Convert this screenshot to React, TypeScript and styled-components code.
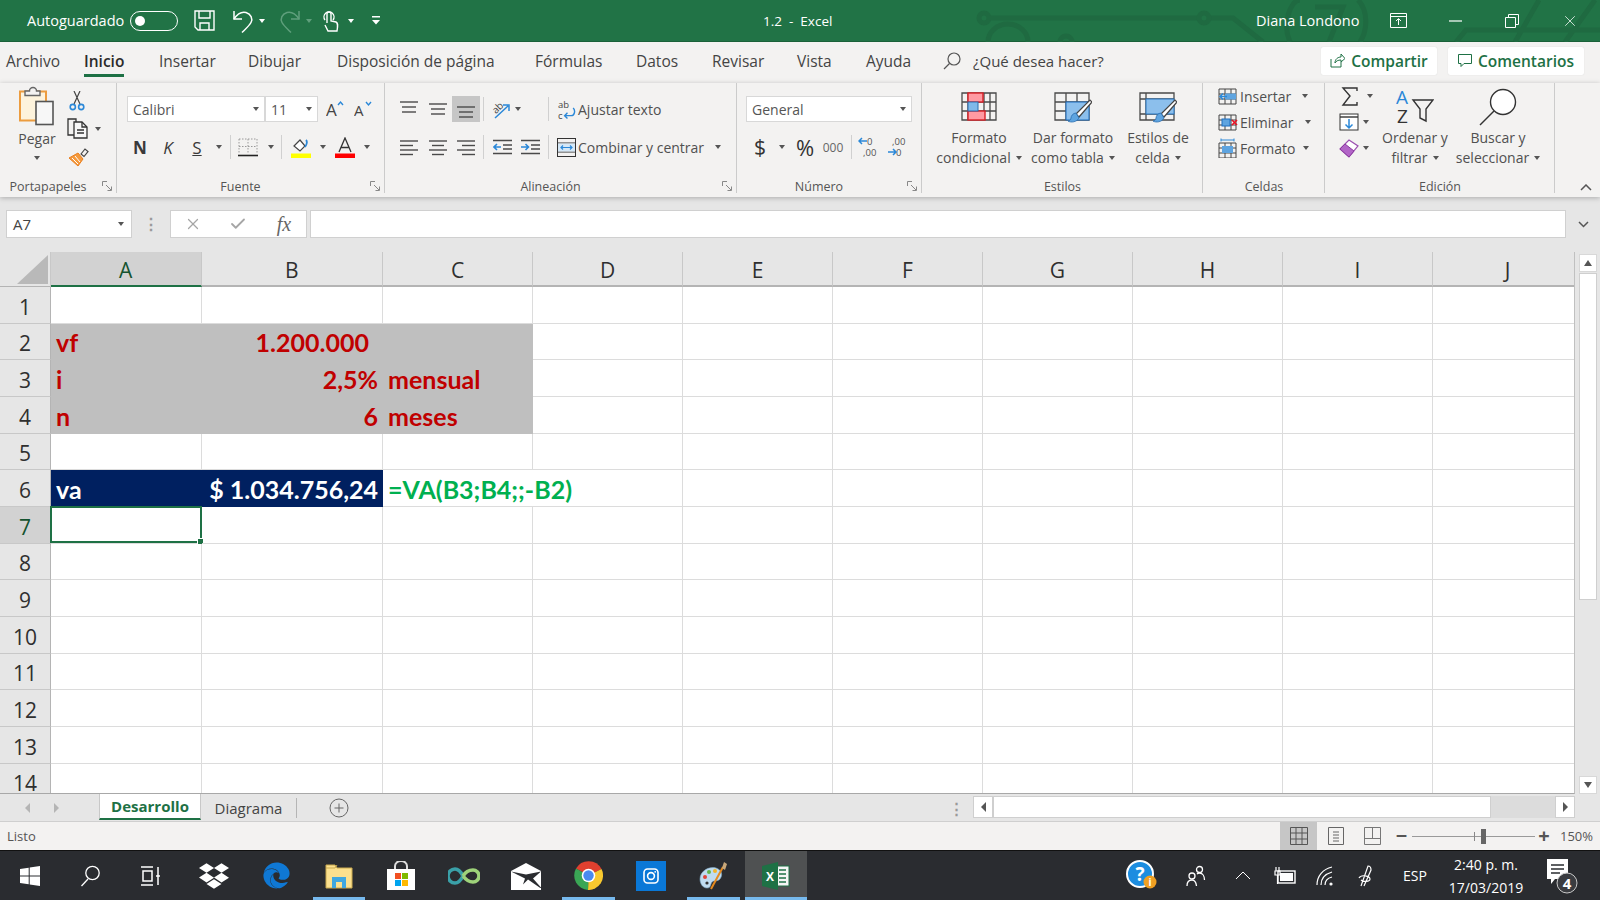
import React from "react";
import styled, { createGlobalStyle } from "styled-components";
import { FaDropbox, FaEdge } from "react-icons/fa";
import { X, Check } from "lucide-react";

const GlobalStyle = createGlobalStyle`
  html, body { margin: 0; padding: 0; width: 1600px; height: 900px; overflow: hidden; background: #e6e6e6; }
  body { font-family: "Open Sans", "Noto Sans", sans-serif; color: #444; }
`;

const ink = "#444";
const green = "#217346";
const blue = "#2b88d8";

const Page = styled.div`
  width: 1600px;
  height: 900px;
  display: flex;
  flex-direction: column;
  overflow: hidden;
`;

/* title bar */
const TitleBar = styled.div`
  position: relative;
  height: 42px;
  flex: none;
  display: flex;
  align-items: center;
  background: ${green};
  border-bottom: 1px solid #1a6139;
  box-sizing: border-box;
  color: #fff;
  font-size: 15px;
`;
const Circuit = styled.svg`
  position: absolute;
  left: 960px;
  top: 0;
`;
const TitleLeft = styled.div`
  position: relative;
  width: 763px;
  flex: none;
  display: flex;
  align-items: center;
  padding-left: 27px;
  box-sizing: border-box;
`;
const TitleText = styled.span`
  position: relative;
  white-space: pre;
  font-size: 13.5px;
`;
const TitleRight = styled.div`
  position: relative;
  margin-left: auto;
  display: flex;
  align-items: center;
  padding-right: 13px;
`;
const UserName = styled.span`
  width: 101px;
  white-space: nowrap;
  font-size: 14.5px;
`;
const AutoLabel = styled.span`
  width: 97px;
  white-space: nowrap;
  font-size: 14.5px;
`;
const Toggle = styled.span`
  width: 48px;
  height: 20px;
  margin-left: 6px;
  flex: none;
  box-sizing: border-box;
  border: 1.5px solid #fff;
  border-radius: 10px;
  display: flex;
  align-items: center;
  padding-left: 4px;
  &::before {
    content: "";
    width: 10px;
    height: 10px;
    border-radius: 50%;
    background: #fff;
  }
`;

const Tool = styled.span<{ $w: number; $h?: number; $ml?: number; $on?: boolean; $color?: string; $size?: number }>`
  width: ${(p) => p.$w}px;
  margin-left: ${(p) => p.$ml ?? 0}px;
  flex: none;
  display: flex;
  align-items: center;
  justify-content: center;
  height: ${(p) => p.$h ?? 26}px;
  background: ${(p) => (p.$on ? "#c6c6c6" : "transparent")};
  color: ${(p) => p.$color ?? ink};
  font-size: ${(p) => p.$size ?? 14}px;
  white-space: nowrap;
`;
const Caret = styled.span<{ $c?: string }>`
  width: 0;
  height: 0;
  flex: none;
  border-left: 3.5px solid transparent;
  border-right: 3.5px solid transparent;
  border-top: 4px solid ${(p) => p.$c ?? "#555"};
`;

/* tabs */
const TabRow = styled.div`
  height: 41px;
  flex: none;
  display: flex;
  align-items: center;
  box-sizing: border-box;
  padding: 0 0 4px 6px;
  background: #f3f2f1;
  font-size: 15.5px;
  color: ${ink};
`;
const Tab = styled.div<{ $w: number }>`
  width: ${(p) => p.$w}px;
  flex: none;
  white-space: nowrap;
`;
const TabLabel = styled.span<{ $active?: boolean }>`
  position: relative;
  display: inline-block;
  font-weight: ${(p) => (p.$active ? 600 : 400)};
  color: ${(p) => (p.$active ? "#2b2b2b" : ink)};
  &::after {
    content: "";
    display: ${(p) => (p.$active ? "block" : "none")};
    position: absolute;
    left: 0;
    right: 0;
    bottom: -5px;
    height: 3px;
    background: #1e7145;
  }
`;
const TellMe = styled.div`
  width: 378px;
  flex: none;
  display: flex;
  align-items: center;
  gap: 12px;
  white-space: nowrap;
  font-size: 15px;
`;
const ShareButton = styled.div<{ $w: number }>`
  width: ${(p) => p.$w}px;
  height: 28px;
  margin-right: 11px;
  flex: none;
  display: flex;
  align-items: center;
  justify-content: center;
  gap: 6px;
  background: #fff;
  border-radius: 2px;
  box-shadow: 0 0 1px #ccc;
  color: #1e7145;
  font-weight: 600;
  font-size: 15.5px;
  white-space: nowrap;
`;

/* ribbon */
const Ribbon = styled.div`
  position: relative;
  z-index: 2;
  height: 114px;
  flex: none;
  display: flex;
  background: #f3f2f1;
  box-shadow: 0 1px 5px rgba(0, 0, 0, 0.25);
`;
const Group = styled.div<{ $w: number }>`
  position: relative;
  width: ${(p) => p.$w}px;
  height: 114px;
  flex: none;
  display: flex;
  flex-direction: column;
  box-sizing: border-box;
  &::after {
    content: "";
    position: absolute;
    right: 0;
    top: 0;
    bottom: 4px;
    width: 1.5px;
    background: #cbcbcb;
  }
`;
const GroupBody = styled.div<{ $pl?: number; $pt?: number }>`
  flex: 1;
  display: flex;
  padding-left: ${(p) => p.$pl ?? 0}px;
  padding-top: ${(p) => p.$pt ?? 0}px;
  min-height: 0;
`;
const Stack = styled.div<{ $gap?: number; $w?: number }>`
  display: flex;
  flex-direction: column;
  flex: none;
  width: ${(p) => (p.$w ? `${p.$w}px` : "auto")};
  gap: ${(p) => p.$gap ?? 12}px;
`;
const ToolRow = styled.div<{ $h?: number }>`
  display: flex;
  align-items: center;
  height: ${(p) => p.$h ?? 26}px;
`;
const GroupLabel = styled.div<{ $launch?: boolean }>`
  height: 20px;
  line-height: 20px;
  box-sizing: border-box;
  padding-right: ${(p) => (p.$launch ? 21 : 0)}px;
  text-align: center;
  font-size: 12.5px;
  color: #555;
  white-space: nowrap;
`;
const Launcher = styled.svg`
  position: absolute;
  right: 5px;
  bottom: 6px;
`;
const Sep = styled.span<{ $l: number; $r: number }>`
  width: 1px;
  height: 24px;
  flex: none;
  margin: 0 ${(p) => p.$r}px 0 ${(p) => p.$l}px;
  background: #d0d0d0;
`;
const ComboBox = styled.div<{ $w: number }>`
  width: ${(p) => p.$w}px;
  height: 26px;
  flex: none;
  box-sizing: border-box;
  display: flex;
  align-items: center;
  justify-content: space-between;
  padding: 0 5px;
  background: #fff;
  border: 1px solid #d8d8d8;
  font-size: 14px;
  color: #555;
`;
const BigButton = styled.div<{ $w: number; $ml?: number }>`
  width: ${(p) => p.$w}px;
  margin-left: ${(p) => p.$ml ?? 0}px;
  flex: none;
  display: flex;
  flex-direction: column;
  align-items: center;
  font-size: 14px;
  line-height: 20px;
  color: #505050;
`;
const BigIcon = styled.div<{ $h?: number; $pt?: number }>`
  height: ${(p) => p.$h ?? 36}px;
  padding-top: ${(p) => p.$pt ?? 0}px;
  box-sizing: border-box;
  display: flex;
  align-items: flex-start;
  justify-content: center;
`;
const BigLine = styled.span<{ $mt?: number }>`
  display: flex;
  align-items: center;
  gap: 5px;
  margin-top: ${(p) => p.$mt ?? 0}px;
  white-space: nowrap;
`;
const SmallIcons = styled.div`
  display: flex;
  flex-direction: column;
  align-items: flex-start;
  margin-left: 11px;
`;
const Collapse = styled.div`
  flex: 1;
  display: flex;
  align-items: flex-end;
  justify-content: flex-end;
  padding: 0 8px 6px 0;
`;
const TextTool = styled.span<{ $w: number }>`
  width: ${(p) => p.$w}px;
  margin-left: 2px;
  flex: none;
  white-space: nowrap;
  font-size: 14px;
  color: #505050;
`;
const Glyph = styled.span<{ $b?: boolean; $i?: boolean; $u?: boolean; $s?: number }>`
  font-weight: ${(p) => (p.$b ? 700 : 400)};
  font-style: ${(p) => (p.$i ? "italic" : "normal")};
  text-decoration: ${(p) => (p.$u ? "underline" : "none")};
  font-size: ${(p) => p.$s ?? 16}px;
  color: #3a3a3a;
`;

/* formula bar */
const FormulaBar = styled.div`
  height: 55px;
  flex: none;
  display: flex;
  align-items: flex-start;
  padding: 13px 0 0 6px;
  box-sizing: border-box;
  background: #e6e6e6;
`;
const FxField = styled.div<{ $w: number; $ml?: number }>`
  width: ${(p) => p.$w}px;
  height: 28px;
  margin-left: ${(p) => p.$ml ?? 0}px;
  flex: none;
  display: flex;
  align-items: center;
  box-sizing: border-box;
  background: #fff;
  border: 1px solid #d0d0d0;
  font-size: 15px;
  color: #444;
`;
const NameText = styled.span`
  width: 105px;
  padding-left: 6px;
`;
const FxDots = styled.span`
  width: 38px;
  flex: none;
  text-align: center;
  color: #9a9a9a;
  font-size: 16px;
  line-height: 28px;
  font-weight: 700;
`;
const FxGlyph = styled.span`
  font-family: "Liberation Serif", serif;
  font-style: italic;
  font-size: 20px;
  color: #666;
`;

/* sheet */
const SheetArea = styled.div`
  height: 542px;
  flex: none;
  display: flex;
  background: #fff;
`;
const Grid = styled.div`
  width: 1575px;
  height: 542px;
  flex: none;
  overflow: hidden;
  display: grid;
  grid-template-columns: 51px 150.5px 181.5px repeat(8, 150px);
  grid-auto-rows: 36.67px;
  grid-template-rows: 35px;
  border-bottom: 1px solid #a8a8a8;
  border-right: 1px solid #c0c0c0;
  box-sizing: border-box;
`;
const Corner = styled.div`
  background: #e6e6e6;
  border-right: 1px solid #c8c8c8;
  border-bottom: 1px solid #b4b4b4;
  display: flex;
  align-items: flex-end;
  justify-content: flex-end;
  padding: 0 2px 2px 0;
`;
const ColHead = styled.div<{ $active?: boolean }>`
  display: flex;
  align-items: center;
  justify-content: center;
  padding-top: 3px;
  font-size: 21px;
  box-sizing: border-box;
  color: ${(p) => (p.$active ? "#14532f" : "#2f2f2f")};
  background: ${(p) => (p.$active ? "#d2d2d2" : "#e6e6e6")};
  border-right: 1px solid #c8c8c8;
  border-bottom: ${(p) => (p.$active ? "2px solid #1e7145" : "2px solid #b4b4b4")};
`;
const RowHead = styled.div<{ $active?: boolean }>`
  display: flex;
  align-items: center;
  justify-content: center;
  font-size: 21px;
  padding-top: 4px;
  box-sizing: border-box;
  color: ${(p) => (p.$active ? "#14532f" : "#2f2f2f")};
  background: ${(p) => (p.$active ? "#d2d2d2" : "#e6e6e6")};
  border-right: 1px solid #b4b4b4;
  border-bottom: 1px solid #c8c8c8;
`;
const Cell = styled.div<{ $bg?: string; $fg?: string; $right?: boolean; $pr?: number; $bare?: boolean; $open?: boolean }>`
  position: relative;
  display: flex;
  align-items: center;
  justify-content: ${(p) => (p.$right ? "flex-end" : "flex-start")};
  box-sizing: border-box;
  padding: 1px ${(p) => p.$pr ?? 5}px 0 5px;
  background: ${(p) => p.$bg ?? "transparent"};
  color: ${(p) => p.$fg ?? "#000"};
  border-right: ${(p) => (p.$bare || p.$open ? "none" : "1px solid #dcdcdc")};
  border-bottom: ${(p) => (p.$bare ? "none" : "1px solid #dcdcdc")};
  font-family: Lato, "Open Sans", sans-serif;
  font-weight: 700;
  font-size: 25px;
  white-space: nowrap;
`;
const Selection = styled.div`
  position: absolute;
  inset: -1px -1px 0 -1px;
  border: 2px solid #1e7145;
  &::after {
    content: "";
    position: absolute;
    right: -4px;
    bottom: -4px;
    width: 5px;
    height: 5px;
    background: #1e7145;
    border: 1px solid #fff;
  }
`;
const VScroll = styled.div`
  width: 25px;
  flex: none;
  display: flex;
  flex-direction: column;
  align-items: center;
  padding-top: 2px;
  height: 542px;
  box-sizing: border-box;
  background: #e6e6e6;
`;
const VButton = styled.div`
  width: 18px;
  height: 18px;
  flex: none;
  display: flex;
  align-items: center;
  justify-content: center;
  background: #fff;
  border: 1px solid #d8d8d8;
  box-sizing: border-box;
`;
const VThumb = styled.div`
  width: 18px;
  height: 327px;
  flex: none;
  margin-top: 1px;
  margin-bottom: auto;
  background: #fff;
  border: 1px solid #cfcfcf;
  box-sizing: border-box;
`;
const TriDown = styled.span`
  border-left: 4.5px solid transparent;
  border-right: 4.5px solid transparent;
  border-top: 6px solid #555;
`;
const TriUp = styled.span`
  border-left: 4.5px solid transparent;
  border-right: 4.5px solid transparent;
  border-bottom: 6px solid #555;
`;
const TriSide = styled.span<{ $dir: "l" | "r"; $c?: string }>`
  border-top: 5px solid transparent;
  border-bottom: 5px solid transparent;
  ${(p) => (p.$dir === "l" ? `border-right: 5px solid ${p.$c ?? "#555"};` : `border-left: 5px solid ${p.$c ?? "#555"};`)}
`;

/* sheet tabs */
const SheetBar = styled.div`
  height: 28px;
  flex: none;
  display: flex;
  align-items: stretch;
  background: #e6e6e6;
  border-bottom: 1px solid #cfcfcf;
  box-sizing: border-box;
`;
const SheetTab = styled.div<{ $active?: boolean; $w: number }>`
  width: ${(p) => p.$w}px;
  flex: none;
  display: flex;
  align-items: center;
  justify-content: center;
  box-sizing: border-box;
  font-size: 15px;
  white-space: nowrap;
  font-weight: ${(p) => (p.$active ? 700 : 400)};
  color: ${(p) => (p.$active ? "#1e7145" : "#444")};
  background: ${(p) => (p.$active ? "#fff" : "transparent")};
  height: ${(p) => (p.$active ? "26px" : "auto")};
  border-bottom: ${(p) => (p.$active ? "2px solid #1e7145" : "none")};
  border-left: ${(p) => (p.$active ? "1px solid #c8c8c8" : "none")};
  border-right: ${(p) => (p.$active ? "1px solid #c8c8c8" : "none")};
`;
const NavSlot = styled.div<{ $w: number }>`
  width: ${(p) => p.$w}px;
  flex: none;
  display: flex;
  align-items: center;
  justify-content: center;
`;
const TabDots = styled.div`
  width: 586px;
  flex: none;
  box-sizing: border-box;
  padding-right: 2px;
  display: flex;
  align-items: center;
  justify-content: flex-end;
  color: #999;
  font-weight: 700;
  font-size: 15px;
`;
const TabDivider = styled.span`
  width: 1px;
  height: 20px;
  align-self: center;
  background: #b5b5b5;
  flex: none;
`;
const HScroll = styled.div`
  width: 602px;
  height: 22px;
  margin: 2px 0 0 7px;
  flex: none;
  display: flex;
  background: #dcdcdc;
`;
const HButton = styled.div`
  width: 20px;
  flex: none;
  display: flex;
  align-items: center;
  justify-content: center;
  background: #fff;
  box-sizing: border-box;
  border: 1px solid #cfcfcf;
`;
const HThumb = styled.div`
  width: 498px;
  flex: none;
  background: #fff;
  box-sizing: border-box;
  border: 1px solid #cfcfcf;
`;
const HTrack = styled.div`
  flex: 1;
`;

/* status bar */
const StatusBar = styled.div`
  height: 28px;
  flex: none;
  display: flex;
  align-items: center;
  background: #f3f2f1;
  font-size: 13px;
  color: #555;
  padding-left: 7px;
`;
const StatusText = styled.span`
  width: 1273px;
  flex: none;
`;
const ViewButton = styled.div<{ $on?: boolean; $w: number }>`
  width: ${(p) => p.$w}px;
  height: 28px;
  flex: none;
  display: flex;
  align-items: center;
  justify-content: center;
  background: ${(p) => (p.$on ? "#c6c6c6" : "transparent")};
`;
const ZoomSign = styled.span<{ $w: number }>`
  width: ${(p) => p.$w}px;
  flex: none;
  text-align: center;
  font-size: 20px;
  font-weight: 700;
  line-height: 20px;
  color: #555;
`;
const ZoomTrack = styled.div`
  position: relative;
  width: 123px;
  height: 1px;
  flex: none;
  background: #9a9a9a;
`;
const ZoomThumb = styled.span`
  position: absolute;
  left: 69px;
  top: -7px;
  width: 5px;
  height: 15px;
  background: #666;
`;
const ZoomTick = styled.span`
  position: absolute;
  left: 62px;
  top: -4px;
  width: 1px;
  height: 9px;
  background: #888;
`;
const ZoomValue = styled.span`
  width: 47px;
  flex: none;
  font-size: 13px;
  text-align: center;
`;

/* taskbar */
const Taskbar = styled.div`
  height: 50px;
  flex: none;
  display: flex;
  align-items: stretch;
  background: #2a2c30;
  border-top: 1px solid #111;
  box-sizing: border-box;
  color: #fff;
`;
const TaskSlot = styled.div<{ $w: number; $on?: boolean; $mark?: "short" | "full" }>`
  position: relative;
  width: ${(p) => p.$w}px;
  flex: none;
  display: flex;
  align-items: center;
  justify-content: center;
  background: ${(p) => (p.$on ? "#4f5152" : "transparent")};
  &::after {
    content: "";
    display: ${(p) => (p.$mark ? "block" : "none")};
    position: absolute;
    bottom: 0;
    left: ${(p) => (p.$mark === "short" ? "5px" : "0")};
    right: ${(p) => (p.$mark === "short" ? "5px" : "0")};
    height: 3px;
    background: #76b9ed;
  }
`;
const Tray = styled.div`
  margin-left: auto;
  display: flex;
  align-items: stretch;
  padding-right: 6px;
`;
const TraySlot = styled.div<{ $w: number }>`
  width: ${(p) => p.$w}px;
  flex: none;
  display: flex;
  flex-direction: column;
  align-items: center;
  justify-content: center;
  font-size: 14px;
  line-height: 23px;
  white-space: nowrap;
`;

const Launch = () => (
  <Launcher width="10" height="10" viewBox="0 0 10 10" fill="none" stroke="#888">
    <path d="M.5 5V.5H5M4 4l5 5M9.5 5.5v4h-4" />
  </Launcher>
);

const Circuitry = () => (
  <Circuit width="640" height="42" viewBox="0 0 640 42" fill="none" stroke="#1f6a41" strokeWidth="5">
    <circle cx="24" cy="18" r="5" />
    <path d="M29 18h210M249 18h24l30 24" />
    <circle cx="244" cy="18" r="5" />
    <path d="M28 42a20 18 0 0 1 40 0M100 42a6 6 0 0 1 12 0" />
    <path d="M330 42C322 25 330 0 340 0M398 0c10 10 10 30 2 42M355 7h28l-14 35" />
    <path d="M496 42l10-12h134M555 42l24-42M605 42l30-42" />
  </Circuit>
);

const UndoArrow = ({ color, flip }: { color: string; flip?: boolean }) => (
  <svg width="24" height="26" viewBox="0 0 24 26" fill="none" stroke={color} strokeWidth="1.5">
    <g transform={flip ? "matrix(-1 0 0 1 24 0)" : undefined}>
      <path d="M3 3v8h8" />
      <path d="M3 11C7 5 11 3.500 15 4.500c5 1.500 7 6 5 10-1.500 3-6 7-9 10" />
    </g>
  </svg>
);

const Lines = ({ ys, xs }: { ys: number[]; xs: [number, number][] }) => (
  <svg width="18" height="18" viewBox="0 0 18 18" fill="none" stroke="#4a4a4a" strokeWidth="1.4">
    {ys.map((y, i) => (
      <path key={i} d={`M${xs[i][0]} ${y}H${xs[i][1]}`} />
    ))}
  </svg>
);
const alignV = (top: number) => (
  <Lines ys={[top, top + 5, top + 10]} xs={[[0, 18], [2, 16], [2, 16]]} />
);
const alignH = (k: "l" | "c" | "r") => {
  const s: [number, number][] =
    k === "l" ? [[0, 18], [0, 13], [0, 18], [0, 13]] : k === "c" ? [[0, 18], [3, 15], [0, 18], [3, 15]] : [[0, 18], [5, 18], [0, 18], [5, 18]];
  return <Lines ys={[3, 7.5, 12, 16.5]} xs={s} />;
};
const Indent = ({ flip }: { flip?: boolean }) => (
  <svg width="19" height="18" viewBox="0 0 19 18" fill="none" stroke="#4a4a4a" strokeWidth="1.4">
    <path d="M0 2.5h19M10 7h9M10 11h9M0 15.5h19" />
    <path d={flip ? "M0 9h7M4.5 6l3 3-3 3" : "M8 9H1M4 6L1 9l3 3"} stroke={blue} strokeWidth="1.6" />
  </svg>
);

const Paste = () => (
  <svg width="36" height="40" viewBox="0 0 36 40">
    <rect x="1" y="5.5" width="26" height="29" fill="#fdf3dc" stroke="#ec9c3f" strokeWidth="2" />
    <path d="M6 9.5V5h4.5a3.5 3.5 0 0 1 7 0H21v4.5z" fill="#f3f2f1" stroke="#666" strokeWidth="1.4" />
    <rect x="17" y="15.5" width="17" height="23" fill="#f7f7f7" stroke="#555" strokeWidth="1.6" />
  </svg>
);
const Scissors = () => (
  <svg width="16" height="20" viewBox="0 0 16 20" fill="none">
    <path d="M5 13L11 0M11 13L5 0" stroke="#444" strokeWidth="1.2" />
    <circle cx="3.8" cy="16" r="2.6" stroke={blue} strokeWidth="1.6" />
    <circle cx="12.2" cy="16" r="2.6" stroke={blue} strokeWidth="1.6" />
  </svg>
);
const CopyIcon = () => (
  <svg width="22" height="21" viewBox="0 0 22 21" fill="none" stroke="#333" strokeWidth="1.3">
    <path d="M7 17H1V1h8v3" />
    <path d="M7 4h8l5 5v11H7z" fill="#f7f7f7" />
    <path d="M15 4v5h5M10 12h7M10 15h7" />
  </svg>
);
const BrushIcon = () => (
  <svg width="21" height="20" viewBox="0 0 21 20" fill="none">
    <path d="M13 7l4-5 3 2.5-4 5z" stroke="#444" strokeWidth="1.2" />
    <path d="M1 11l9-5 5 6-5 7z" fill="#f59a3d" stroke="#e97f1e" />
    <path d="M4 11l6 6M7 9l5 6" stroke="#fff" strokeWidth="1" />
  </svg>
);
const BiggerA = ({ up }: { up?: boolean }) => (
  <svg width="20" height="24" viewBox="0 0 20 24" fill="none">
    <text x="0" y="19" fontFamily="Open Sans" fontSize={up ? 17 : 15} fill="#444">A</text>
    <path d={up ? "M12 8l2.5-3L17 8" : "M12 5l2.5 3L17 5"} stroke={blue} strokeWidth="1.4" />
  </svg>
);
const Borders = () => (
  <svg width="20" height="20" viewBox="0 0 20 20" fill="none">
    <path d="M1 2h18v15M1 2v15M1 9.5h18M10 2v15" stroke="#9a9a9a" strokeDasharray="1.5 1.5" />
    <path d="M0 18.5h20" stroke="#222" strokeWidth="1.6" />
  </svg>
);
const FillColor = () => (
  <svg width="20" height="21" viewBox="0 0 20 21" fill="none">
    <path d="M3 9l6-6 5 6-5 5z" stroke="#444" strokeWidth="1.2" fill="#fff" />
    <path d="M14 10c2-3 3-5 1-7" stroke={blue} strokeWidth="1.8" />
    <rect x="0" y="16.5" width="20" height="4.5" fill="#ffff00" />
  </svg>
);
const FontColor = () => (
  <svg width="20" height="21" viewBox="0 0 20 21">
    <path d="M4 15L10 1l6 14M6 10.5h8" fill="none" stroke="#333" strokeWidth="1.3" />
    <rect x="0" y="16.5" width="20" height="4.5" fill="#ff0000" />
  </svg>
);
const Orient = () => (
  <svg width="26" height="26" viewBox="0 0 26 26" fill="none">
    <text x="4" y="15" fontFamily="Open Sans" fontSize="10" fill="#444" transform="rotate(-45 10 12)">ab</text>
    <path d="M7 22L20 10M15 9h6v6" stroke={blue} strokeWidth="1.5" />
  </svg>
);
const Wrap = () => (
  <svg width="19" height="25" viewBox="0 0 19 25" fill="none">
    <text x="0" y="11" fontFamily="Open Sans" fontSize="10" fill="#444">ab</text>
    <text x="0" y="23" fontFamily="Open Sans" fontSize="10" fill="#444">c</text>
    <path d="M16 11c3 3 1 8-2 8H7M10 16l-3 3 3 3" stroke={blue} strokeWidth="1.5" />
  </svg>
);
const Merge = () => (
  <svg width="19" height="19" viewBox="0 0 19 19" fill="none" stroke="#333">
    <rect x=".5" y=".5" width="18" height="18" />
    <path d="M.5 5h18M.5 14h18" />
    <rect x="1" y="5.5" width="17" height="8" fill="#d5e8f7" stroke="none" />
    <path d="M4 9.5h11M6 7.5l-2 2 2 2M13 7.5l2 2-2 2" stroke={blue} strokeWidth="1.2" />
  </svg>
);
const Decimal = ({ inc }: { inc?: boolean }) => (
  <svg width="20" height="26" viewBox="0 0 20 26" fill="none">
    <text x={inc ? 9 : 5} y="11" fontFamily="Open Sans" fontSize="9.5" fill="#555">{inc ? "0" : ",00"}</text>
    <text x={inc ? 5 : 9} y="22" fontFamily="Open Sans" fontSize="9.5" fill="#555">{inc ? ",00" : "0"}</text>
    {inc ? <path d="M9 7H1M4 4L1 7l3 3" stroke={blue} strokeWidth="1.5" /> : <path d="M1 18h8M6 15l3 3-3 3" stroke={blue} strokeWidth="1.5" />}
  </svg>
);
const CondFormat = () => (
  <svg width="36" height="29" viewBox="0 0 36 29" fill="none">
    <path d="M1 1h34v27H1zM1 10h34M1 19h34M7 1v27M23 1v27M29 1v27" stroke="#4a4a4a" strokeWidth="1.3" />
    <rect x="7" y="1" width="15" height="9" fill="#ff9aa2" stroke="#d81f26" strokeWidth="1.4" />
    <rect x="7" y="19" width="17" height="9" fill="#ff9aa2" stroke="#d81f26" strokeWidth="1.4" />
    <rect x="7" y="10" width="10" height="9" fill="#7fb9ea" stroke="#2b6fb0" />
  </svg>
);
const PaintBrush = () => (
  <g>
    <path d="M22 22L36 8l2 2-13 15z" fill="#fff" stroke="#444" strokeWidth="1.2" />
    <path d="M22 21c-3 0-5 3-5 5s-2 3-3 3c3 2 9 1 11-3z" fill="#5ea4e0" stroke="#2b6fb0" strokeWidth=".8" />
  </g>
);
const TableFormat = () => (
  <svg width="38" height="31" viewBox="0 0 38 31" fill="none">
    <path d="M1 1h34v27H1zM1 10h34M1 19h34M12 1v27M23 1v27" stroke="#4a4a4a" strokeWidth="1.3" />
    <rect x="12" y="10" width="23" height="18" fill="#8cbfec" stroke="#1f6fc0" />
    <PaintBrush />
  </svg>
);
const CellStyle = () => (
  <svg width="38" height="31" viewBox="0 0 38 31" fill="none">
    <path d="M1 1h34v27H1zM1 7h34M7 1v27M1 22h34" stroke="#4a4a4a" strokeWidth="1.3" />
    <rect x="7" y="7" width="28" height="15" fill="#8cbfec" stroke="#2b78c2" />
    <PaintBrush />
  </svg>
);
const GridBase = () => <path d="M1 3h17v15H1zM1 8h17M1 13h17M7 3v15M13 3v15" stroke="#444" />;
const InsertCell = () => (
  <svg width="20" height="20" viewBox="0 0 20 20" fill="none">
    <GridBase />
    <rect x="7" y="7.5" width="11" height="6" fill="#5ea4e0" />
    <path d="M9 10.5H2M5 7.5l-3 3 3 3" stroke={blue} strokeWidth="1.5" />
  </svg>
);
const DeleteCell = () => (
  <svg width="20" height="20" viewBox="0 0 20 20" fill="none">
    <GridBase />
    <rect x="4" y="7" width="8" height="7" fill="#5ea4e0" stroke="#1f6fc0" />
    <path d="M14 8l5 5M19 8l-5 5" stroke="#e81123" strokeWidth="1.6" />
  </svg>
);
const FormatCell = () => (
  <svg width="20" height="20" viewBox="0 0 20 20" fill="none">
    <path d="M1 5h17v15H1zM1 10h17M1 15h17M7 5v15M13 5v15" stroke="#444" />
    <rect x="4" y="8" width="11" height="7" fill="#5ea4e0" />
    <path d="M3 2h13M3 .5v3M16 .5v3" stroke={blue} />
  </svg>
);
const Sigma = () => (
  <svg width="18" height="19" viewBox="0 0 18 19" fill="none">
    <path d="M16 4V1H2l7 8-7 9h14v-3" stroke="#333" strokeWidth="1.4" />
  </svg>
);
const FillDown = () => (
  <svg width="20" height="18" viewBox="0 0 20 18" fill="none">
    <rect x="1" y="1" width="18" height="16" stroke="#333" fill="#fff" />
    <path d="M1 4h18" stroke="#333" strokeWidth="1.4" />
    <path d="M10 6v9M6.5 11.5L10 15l3.5-3.5" stroke={blue} strokeWidth="1.5" />
  </svg>
);
const Eraser = () => (
  <svg width="20" height="19" viewBox="0 0 20 19" fill="none">
    <path d="M1 10l9-9 9 6-9 11z" fill="#fff" stroke="#9b4fb0" strokeWidth="1.2" />
    <path d="M1 10l5-5 9 7-5 6z" fill="#b265c7" stroke="#8b3aa0" />
  </svg>
);
const SortFilter = () => (
  <svg width="38" height="42" viewBox="0 0 38 42" fill="none">
    <text x="0" y="18" fontFamily="Open Sans" fontSize="19" fill={blue}>A</text>
    <text x="1" y="37" fontFamily="Open Sans" fontSize="19" fill="#333">Z</text>
    <path d="M17 14h20l-7 9v12l-6-3v-9z" stroke="#333" strokeWidth="1.4" fill="#f3f2f1" />
  </svg>
);
const FindIcon = () => (
  <svg width="38" height="38" viewBox="0 0 38 38" fill="none" stroke="#333" strokeWidth="1.4">
    <circle cx="24" cy="14" r="12.5" fill="#fff" />
    <path d="M15 23L1 37" />
  </svg>
);

const ExcelIcon = () => (
  <svg width="28" height="28" viewBox="0 0 28 28">
    <rect x="13" y="4" width="14" height="20" fill="#f5f5f5" stroke="#1e7145" />
    <path d="M17 8h7M17 12h7M17 16h7M17 20h7" stroke="#1e7145" strokeWidth="1.6" />
    <path d="M0 4l16-4v28L0 24z" fill="#1e7145" />
    <text x="4" y="19" fontFamily="Open Sans" fontSize="12" fontWeight="700" fill="#fff">X</text>
  </svg>
);
const WindowsLogo = () => (
  <svg width="20" height="20" viewBox="0 0 20 20" fill="#fff">
    <path d="M0 3l8.7-1.3v7.8H0zM9.7 1.6L20 0v9.5H9.7zM0 10.5h8.7v7.800L0 17zM9.7 10.500H20V20L9.7 18.4z" />
  </svg>
);
const TaskSearch = () => (
  <svg width="20" height="22" viewBox="0 0 20 22" fill="none" stroke="#fff" strokeWidth="1.3">
    <circle cx="12.5" cy="8" r="6.7" />
    <path d="M8 14L1.500 21" />
  </svg>
);
const TaskView = () => (
  <svg width="21" height="20" viewBox="0 0 21 20" fill="none" stroke="#fff" strokeWidth="1.5">
    <path d="M1 1h12M1 19h12M3 5h9v10H3zM18 1v18" />
    <path d="M16 10h4" />
  </svg>
);
const Folder = () => (
  <svg width="28" height="26" viewBox="0 0 28 26">
    <path d="M1 2h9l2 3h15v20H1z" fill="#fbe08e" stroke="#c9a94f" />
    <path d="M1 5h9l2-3" fill="none" stroke="#c9a94f" />
    <path d="M7 25V14h14v11h-4v-6h-6v6z" fill="#3fa7e0" />
  </svg>
);
const Store = () => (
  <svg width="30" height="30" viewBox="0 0 30 30">
    <path d="M9 9V5a6 5 0 0 1 12 0v4" fill="none" stroke="#ddd" strokeWidth="2" />
    <path d="M1 8h28v21H1z" fill="#fff" />
    <rect x="9" y="12" width="6" height="6" fill="#f25022" />
    <rect x="16" y="12" width="6" height="6" fill="#7fba00" />
    <rect x="9" y="19" width="6" height="6" fill="#00a4ef" />
    <rect x="16" y="19" width="6" height="6" fill="#ffb900" />
  </svg>
);
const Infinity8 = () => (
  <svg width="32" height="20" viewBox="0 0 32 20" fill="none" strokeWidth="3.6">
    <path d="M15 10C12 4 9 3 7 3a7 7 0 0 0 0 14c4 0 6-3 8-7" stroke="#3aa0a8" />
    <path d="M15 10c3-5 6-6 10-6a6 6 0 0 1 0 12c-4 0-7-2-10-6" stroke="#9ed37a" />
  </svg>
);
const Mail = () => (
  <svg width="32" height="28" viewBox="0 0 32 28">
    <path d="M1 9L16 1l15 8v18H1z" fill="#fff" />
    <path d="M1 9.500l14 7-2 6 5-5 13 9v-1l-8-9 8-7-15 3z" fill="#2a2c30" />
    <path d="M1 27h30" stroke="#fff" strokeWidth="2" />
  </svg>
);
const ChromeIcon = () => (
  <svg width="29" height="29" viewBox="0 0 29 29">
    <path d="M14.5 14.5L2 7.5A14.5 14.5 0 0 1 27.5 8z" fill="#e0402f" />
    <path d="M14.5 14.5L27.5 8A14.5 14.5 0 0 1 14 29z" fill="#f8c92f" />
    <path d="M14.5 14.5L14 29A14.5 14.5 0 0 1 2 7.5z" fill="#3aa655" />
    <circle cx="14.5" cy="14.5" r="6.8" fill="#fff" />
    <circle cx="14.5" cy="14.5" r="5.2" fill="#4a8af0" />
  </svg>
);
const Insta = () => (
  <svg width="30" height="30" viewBox="0 0 30 30" fill="none">
    <rect width="30" height="30" fill="#0a78d7" />
    <rect x="8" y="8" width="14" height="14" rx="3.5" stroke="#fff" strokeWidth="1.6" />
    <circle cx="15" cy="15" r="3.4" stroke="#fff" strokeWidth="1.6" />
    <circle cx="19.2" cy="10.8" r=".9" fill="#fff" />
  </svg>
);
const Palette = () => (
  <svg width="30" height="30" viewBox="0 0 30 30">
    <path d="M2 18c0-8 9-13 16-11 6 2 7 7 4 11-3 3-6 1-8 3-2 3-1 6-5 6-4 0-7-4-7-9z" fill="#bfdcf0" stroke="#7da7c4" strokeWidth=".6" />
    <circle cx="7" cy="16" r="2" fill="#e0453a" />
    <circle cx="11" cy="11" r="2" fill="#62b64b" />
    <circle cx="17" cy="10" r="2" fill="#f1b52c" />
    <circle cx="9" cy="22" r="1.6" fill="#333" />
    <path d="M13 28L25 6" stroke="#e58a1f" strokeWidth="2" />
    <path d="M24 7l2-6 3 2-2 6z" fill="#c9a87a" />
  </svg>
);
const HelpBadge = () => (
  <svg width="32" height="34" viewBox="0 0 32 34">
    <circle cx="14" cy="15" r="13" fill="#1c8de0" stroke="#fff" strokeWidth="2" />
    <text x="14" y="22" textAnchor="middle" fontFamily="Open Sans" fontWeight="700" fontSize="19" fill="#fff">?</text>
    <circle cx="24" cy="23" r="6.5" fill="#f0a022" />
    <text x="24" y="27" textAnchor="middle" fontFamily="Open Sans" fontWeight="700" fontSize="10" fill="#fff">i</text>
  </svg>
);
const People = () => (
  <svg width="20" height="22" viewBox="0 0 20 22" fill="none" stroke="#fff" strokeWidth="1.3">
    <circle cx="13.5" cy="4.5" r="3" />
    <circle cx="6" cy="11" r="3" />
    <path d="M1 21c0-4 2-6 5-6s4 2 4.500 6M11 9c1-1 1.500-1 2.500-1 3 0 5 3 5 7" />
  </svg>
);
const Battery = () => (
  <svg width="22" height="20" viewBox="0 0 22 20" fill="none" stroke="#fff">
    <rect x="4" y="5" width="17" height="12" fill="#2a2c30" strokeWidth="1.4" />
    <rect x="6" y="7" width="13" height="8" fill="#fff" stroke="none" />
    <path d="M2 1v4M5 1v4M1 5h5v4H1zM3.5 9v9" strokeWidth="1.2" />
  </svg>
);
const Wifi = () => (
  <svg width="18" height="20" viewBox="0 0 18 20" fill="none" stroke="#fff" strokeWidth="1.2">
    <path d="M1 19C1 10 7 3 16 1M5 19c0-6 4-11 11-13M9 19c0-4 3-7 7-8" />
    <circle cx="15" cy="18" r="1" fill="#fff" />
  </svg>
);
const Pen = () => (
  <svg width="14" height="22" viewBox="0 0 14 22" fill="none" stroke="#fff" strokeWidth="1.2">
    <path d="M3 21L10 1c2 0 3 2 3 4L6 21M1 13c2-4 11-2 11 1s-7 3-9 1" />
  </svg>
);
const Notification = () => (
  <svg width="38" height="40" viewBox="0 0 38 40">
    <path d="M3 3h21v20h-13l-4 5v-5H3z" fill="#fff" />
    <path d="M7 9h13M7 13h13M7 17h9" stroke="#2a2c30" strokeWidth="1.5" />
    <circle cx="23" cy="27" r="10" fill="#3a3c40" stroke="#c8c8c8" />
    <text x="23" y="32.5" textAnchor="middle" fontFamily="Open Sans" fontWeight="700" fontSize="15" fill="#fff">4</text>
  </svg>
);

const tabs: [string, number][] = [
  ["Archivo", 78],
  ["Inicio", 75],
  ["Insertar", 89],
  ["Dibujar", 89],
  ["Disposición de página", 198],
  ["Fórmulas", 101],
  ["Datos", 76],
  ["Revisar", 85],
  ["Vista", 69],
  ["Ayuda", 77],
];
const columns = ["A", "B", "C", "D", "E", "F", "G", "H", "I", "J"];
const RED = "#c00000";
const GREY = "#bfbfbf";
const NAVY = "#002060";

type CellData = { text?: string; bg?: string; fg?: string; right?: boolean; pr?: number; bare?: boolean; open?: boolean };
const cells: Record<string, CellData> = {
  A2: { text: "vf", bg: GREY, fg: RED, bare: true },
  B2: { text: "1.200.000", bg: GREY, fg: RED, right: true, pr: 14, bare: true },
  C2: { bg: GREY, bare: true },
  A3: { text: "i", bg: GREY, fg: RED, bare: true },
  B3: { text: "2,5%", bg: GREY, fg: RED, right: true, bare: true },
  C3: { text: "mensual", bg: GREY, fg: RED, bare: true },
  A4: { text: "n", bg: GREY, fg: RED, bare: true },
  B4: { text: "6", bg: GREY, fg: RED, right: true, bare: true },
  C4: { text: "meses", bg: GREY, fg: RED, bare: true },
  A6: { text: "va", bg: NAVY, fg: "#fff", bare: true },
  B6: { text: "$ 1.034.756,24", bg: NAVY, fg: "#fff", right: true, bare: true },
  C6: { text: "=VA(B3;B4;;-B2)", fg: "#00b050", open: true },
};

export default function App() {
  return (
    <Page>
      <GlobalStyle />
      <TitleBar>
        <Circuitry />
        <TitleLeft>
          <AutoLabel>Autoguardado</AutoLabel>
          <Toggle />
          <Tool $w={52}>
            <svg width="21" height="21" viewBox="0 0 21 21" fill="none" stroke="#fff" strokeWidth="1.4">
              <path d="M1 1h19v19H4l-3-3zM5 1v7h11V1M6 20v-7h9v7" />
            </svg>
          </Tool>
          <Tool $w={26}><UndoArrow color="#fff" /></Tool>
          <Tool $w={12}><Caret $c="#fff" /></Tool>
          <Tool $w={36} $ml={4}><UndoArrow color="#5f9f7c" flip /></Tool>
          <Tool $w={2}><Caret $c="#5f9f7c" /></Tool>
          <Tool $w={40}>
            <svg width="18" height="24" viewBox="0 0 18 24" fill="none" stroke="#fff" strokeWidth="1.4">
              <path d="M4 11a5 5 0 1 1 8 0" />
              <path d="M6 14V5a2 2 0 0 1 4 0v7l5 1c2 1 2 3 1 9H7l-3-6" />
            </svg>
          </Tool>
          <Tool $w={2}><Caret $c="#fff" /></Tool>
          <Tool $w={48}>
            <svg width="10" height="9" viewBox="0 0 10 9" fill="#fff"><path d="M1 0h8v1.500H1zM1 4h8L5 8.500z" /></svg>
          </Tool>
        </TitleLeft>
        <TitleText>1.2  -  Excel</TitleText>
        <TitleRight>
          <UserName>Diana Londono</UserName>
          <Tool $w={82}>
            <svg width="17" height="15" viewBox="0 0 17 15" fill="none" stroke="#fff">
              <path d="M.5.500h16v14H.5zM.5 3.500h16M8.500 12V6M6 8l2.500-2.500L11 8" />
            </svg>
          </Tool>
          <Tool $w={32}><svg width="13" height="2" viewBox="0 0 13 2"><path d="M0 1h13" stroke="#fff" strokeWidth="1.2" /></svg></Tool>
          <Tool $w={82}>
            <svg width="14" height="14" viewBox="0 0 14 14" fill="none" stroke="#fff">
              <path d="M3.500 3V.5h10v10H11M.5 3.500h10v10H.5z" />
            </svg>
          </Tool>
          <Tool $w={34}><X size={18} color="#fff" strokeWidth={1} /></Tool>
        </TitleRight>
      </TitleBar>

      <TabRow>
        {tabs.map(([label, w]) => (
          <Tab key={label} $w={w}>
            <TabLabel $active={label === "Inicio"}>{label}</TabLabel>
          </Tab>
        ))}
        <TellMe>
          <svg width="18" height="18" viewBox="0 0 18 18" fill="none" stroke="#555" strokeWidth="1.2">
            <circle cx="11" cy="7" r="6" />
            <path d="M6.500 11.500L1 17" />
          </svg>
          ¿Qué desea hacer?
        </TellMe>
        <ShareButton $w={116}>
          <svg width="15" height="15" viewBox="0 0 15 15" fill="none" stroke="#1e7145">
            <path d="M1 6v8h10V9M5 10c0-4 3-6 6-6V1l4 4.500L11 9V7C8 7 6 8 5 10z" />
          </svg>
          Compartir
        </ShareButton>
        <ShareButton $w={136}>
          <svg width="14" height="14" viewBox="0 0 14 14" fill="none" stroke="#1e7145">
            <path d="M.5.500h13v9H6l-3 3v-3H.5z" />
          </svg>
          Comentarios
        </ShareButton>
      </TabRow>

      <Ribbon>
        <Group $w={117}>
          <GroupBody $pl={18} $pt={3}>
            <BigButton $w={38}>
              <Paste />
              <BigLine $mt={3}>Pegar</BigLine>
              <Tool $w={10} $h={18}><Caret /></Tool>
            </BigButton>
            <SmallIcons>
              <Tool $w={20} $h={29}><Scissors /></Tool>
              <ToolRow $h={27}>
                <Tool $w={22}><CopyIcon /></Tool>
                <Tool $w={18}><Caret /></Tool>
              </ToolRow>
              <Tool $w={22} $h={29}><BrushIcon /></Tool>
            </SmallIcons>
          </GroupBody>
          <GroupLabel $launch>Portapapeles</GroupLabel>
          <Launch />
        </Group>

        <Group $w={268}>
          <GroupBody $pl={10} $pt={13}>
            <Stack>
              <ToolRow>
                <ComboBox $w={138}>Calibri<Caret /></ComboBox>
                <ComboBox $w={53}>11<Caret /></ComboBox>
                <Tool $w={36}><BiggerA up /></Tool>
                <Tool $w={20}><BiggerA /></Tool>
              </ToolRow>
              <ToolRow>
                <Tool $w={26}><Glyph $b $s={17}>N</Glyph></Tool>
                <Tool $w={30}><Glyph $i $s={17}>K</Glyph></Tool>
                <Tool $w={28}><Glyph $u $s={17}>S</Glyph></Tool>
                <Tool $w={16}><Caret /></Tool>
                <Sep $l={3} $r={3} />
                <Tool $w={28}><Borders /></Tool>
                <Tool $w={18}><Caret /></Tool>
                <Sep $l={1} $r={1} />
                <Tool $w={36}><FillColor /></Tool>
                <Tool $w={8}><Caret /></Tool>
                <Tool $w={36}><FontColor /></Tool>
                <Tool $w={8}><Caret /></Tool>
              </ToolRow>
            </Stack>
          </GroupBody>
          <GroupLabel $launch>Fuente</GroupLabel>
          <Launch />
        </Group>

        <Group $w={352}>
          <GroupBody $pl={10} $pt={13}>
            <Stack>
              <ToolRow>
                <Tool $w={28}>{alignV(2)}</Tool>
                <Tool $w={29}>{alignV(4)}</Tool>
                <Tool $w={28} $on>{alignV(7)}</Tool>
                <Sep $l={3} $r={3} />
                <Tool $w={28}><Orient /></Tool>
                <Tool $w={6}><Caret /></Tool>
                <Sep $l={27} $r={9} />
                <Tool $w={18}><Wrap /></Tool>
                <TextTool $w={100}>Ajustar texto</TextTool>
              </ToolRow>
              <ToolRow>
                <Tool $w={28}>{alignH("l")}</Tool>
                <Tool $w={29}>{alignH("c")}</Tool>
                <Tool $w={28}>{alignH("r")}</Tool>
                <Sep $l={3} $r={3} />
                <Tool $w={30}><Indent /></Tool>
                <Tool $w={26}><Indent flip /></Tool>
                <Sep $l={5} $r={8} />
                <Tool $w={19}><Merge /></Tool>
                <TextTool $w={126}>Combinar y centrar</TextTool>
                <Tool $w={8} $ml={10}><Caret /></Tool>
              </ToolRow>
            </Stack>
          </GroupBody>
          <GroupLabel $launch>Alineación</GroupLabel>
          <Launch />
        </Group>

        <Group $w={185}>
          <GroupBody $pl={9} $pt={13}>
            <Stack>
              <ToolRow><ComboBox $w={166}>General<Caret /></ComboBox></ToolRow>
              <ToolRow>
                <Tool $w={28} $size={21} $color="#333">$</Tool>
                <Tool $w={16}><Caret /></Tool>
                <Tool $w={30} $size={22} $color="#333">%</Tool>
                <Tool $w={26} $size={12} $color="#666">000</Tool>
                <Sep $l={5} $r={0} />
                <Tool $w={32}><Decimal inc /></Tool>
                <Tool $w={26}><Decimal /></Tool>
              </ToolRow>
            </Stack>
          </GroupBody>
          <GroupLabel $launch>Número</GroupLabel>
          <Launch />
        </Group>

        <Group $w={281}>
          <GroupBody $pl={8} $pt={9}>
            <BigButton $w={98}>
              <BigIcon><CondFormat /></BigIcon>
              <BigLine>Formato</BigLine>
              <BigLine>condicional<Caret /></BigLine>
            </BigButton>
            <BigButton $w={90}>
              <BigIcon><TableFormat /></BigIcon>
              <BigLine>Dar formato</BigLine>
              <BigLine>como tabla<Caret /></BigLine>
            </BigButton>
            <BigButton $w={80}>
              <BigIcon><CellStyle /></BigIcon>
              <BigLine>Estilos de</BigLine>
              <BigLine>celda<Caret /></BigLine>
            </BigButton>
          </GroupBody>
          <GroupLabel>Estilos</GroupLabel>
        </Group>

        <Group $w={122}>
          <GroupBody $pl={15} $pt={0}>
            <Stack $gap={-0.5}>
              <ToolRow>
                <Tool $w={20}><InsertCell /></Tool>
                <TextTool $w={61}>Insertar</TextTool>
                <Tool $w={8}><Caret /></Tool>
              </ToolRow>
              <ToolRow>
                <Tool $w={20}><DeleteCell /></Tool>
                <TextTool $w={64}>Eliminar</TextTool>
                <Tool $w={8}><Caret /></Tool>
              </ToolRow>
              <ToolRow>
                <Tool $w={20}><FormatCell /></Tool>
                <TextTool $w={62}>Formato</TextTool>
                <Tool $w={8}><Caret /></Tool>
              </ToolRow>
            </Stack>
          </GroupBody>
          <GroupLabel>Celdas</GroupLabel>
        </Group>

        <Group $w={230}>
          <GroupBody $pl={14} $pt={0}>
            <Stack $gap={0} $w={36}>
              <ToolRow>
                <Tool $w={22}><Sigma /></Tool>
                <Tool $w={18}><Caret /></Tool>
              </ToolRow>
              <ToolRow>
                <Tool $w={20}><FillDown /></Tool>
                <Tool $w={14}><Caret /></Tool>
              </ToolRow>
              <ToolRow>
                <Tool $w={20}><Eraser /></Tool>
                <Tool $w={14}><Caret /></Tool>
              </ToolRow>
            </Stack>
            <BigButton $w={80}>
              <BigIcon $h={45} $pt={3}><SortFilter /></BigIcon>
              <BigLine>Ordenar y</BigLine>
              <BigLine>filtrar<Caret /></BigLine>
            </BigButton>
            <BigButton $w={80} $ml={3}>
              <BigIcon $h={45} $pt={5}><FindIcon /></BigIcon>
              <BigLine>Buscar y</BigLine>
              <BigLine>seleccionar<Caret /></BigLine>
            </BigButton>
          </GroupBody>
          <GroupLabel>Edición</GroupLabel>
        </Group>

        <Collapse>
          <svg width="12" height="7" viewBox="0 0 12 7" fill="none" stroke="#555" strokeWidth="1.5">
            <path d="M1 6l5-5 5 5" />
          </svg>
        </Collapse>
      </Ribbon>

      <FormulaBar>
        <FxField $w={126}>
          <NameText>A7</NameText>
          <Caret />
        </FxField>
        <FxDots>⋮</FxDots>
        <FxField $w={137}>
          <Tool $w={44}><X size={18} color="#a6a6a6" strokeWidth={1.6} /></Tool>
          <Tool $w={46}><Check size={18} color="#a6a6a6" strokeWidth={2.4} /></Tool>
          <Tool $w={46}><FxGlyph>fx</FxGlyph></Tool>
        </FxField>
        <FxField $w={1256} $ml={3} />
        <Tool $w={34} $h={28}>
          <svg width="11" height="7" viewBox="0 0 11 7" fill="none" stroke="#555" strokeWidth="1.5">
            <path d="M1 1l4.500 4.500L10 1" />
          </svg>
        </Tool>
      </FormulaBar>

      <SheetArea>
        <Grid>
          <Corner>
            <svg width="31" height="29" viewBox="0 0 31 29"><path d="M31 0v29H0z" fill="#b9b9b9" /></svg>
          </Corner>
          {columns.map((c) => (
            <ColHead key={c} $active={c === "A"}>{c}</ColHead>
          ))}
          {Array.from({ length: 14 }, (_, i) => i + 1).map((row) => (
            <React.Fragment key={row}>
              <RowHead $active={row === 7}>{row}</RowHead>
              {columns.map((c) => {
                const d = cells[`${c}${row}`] ?? {};
                return (
                  <Cell key={c} $bg={d.bg} $fg={d.fg} $right={d.right} $pr={d.pr} $bare={d.bare} $open={d.open}>
                    {d.text}
                    {c === "A" && row === 7 && <Selection />}
                  </Cell>
                );
              })}
            </React.Fragment>
          ))}
        </Grid>
        <VScroll>
          <VButton><TriUp /></VButton>
          <VThumb />
          <VButton><TriDown /></VButton>
        </VScroll>
      </SheetArea>

      <SheetBar>
        <NavSlot $w={55}><TriSide $dir="l" $c="#b5b5b5" /></NavSlot>
        <NavSlot $w={1} />
        <NavSlot $w={0}><TriSide $dir="r" $c="#b5b5b5" /></NavSlot>
        <NavSlot $w={43} />
        <SheetTab $active $w={102}>Desarrollo</SheetTab>
        <SheetTab $w={95}>Diagrama</SheetTab>
        <TabDivider />
        <NavSlot $w={83}>
          <svg width="20" height="20" viewBox="0 0 20 20" fill="none" stroke="#666">
            <circle cx="10" cy="10" r="9" />
            <path d="M10 5.500v9M5.500 10h9" />
          </svg>
        </NavSlot>
        <TabDots>⋮</TabDots>
        <HScroll>
          <HButton><TriSide $dir="l" /></HButton>
          <HThumb />
          <HTrack />
          <HButton><TriSide $dir="r" /></HButton>
        </HScroll>
      </SheetBar>

      <StatusBar>
        <StatusText>Listo</StatusText>
        <ViewButton $on $w={37}>
          <svg width="18" height="18" viewBox="0 0 18 18" fill="none" stroke="#555">
            <path d="M.5.500h17v17H.5zM.5 6h17M.5 12h17M6 .5v17M12 .5v17" />
          </svg>
        </ViewButton>
        <ViewButton $w={37}>
          <svg width="16" height="18" viewBox="0 0 16 18" fill="none" stroke="#666">
            <path d="M.5.500h15v17H.5zM5 5h6M5 8h6M5 11h6M5 14h6" />
          </svg>
        </ViewButton>
        <ViewButton $w={37}>
          <svg width="17" height="18" viewBox="0 0 17 18" fill="none" stroke="#777">
            <path d="M.5.500h16v17H.5zM8.500.5v11M.5 11.500h16" />
          </svg>
        </ViewButton>
        <ZoomSign $w={21}>−</ZoomSign>
        <ZoomTrack>
          <ZoomTick />
          <ZoomThumb />
        </ZoomTrack>
        <ZoomSign $w={18}>+</ZoomSign>
        <ZoomValue>150%</ZoomValue>
      </StatusBar>

      <Taskbar>
        <TaskSlot $w={60}><WindowsLogo /></TaskSlot>
        <TaskSlot $w={60}><TaskSearch /></TaskSlot>
        <TaskSlot $w={60}><TaskView /></TaskSlot>
        <TaskSlot $w={3} />
        <TaskSlot $w={62.4}><FaDropbox size={30} color="#fff" /></TaskSlot>
        <TaskSlot $w={62.4}><FaEdge size={27} color="#0f78d4" /></TaskSlot>
        <TaskSlot $w={62.4} $mark="short"><Folder /></TaskSlot>
        <TaskSlot $w={62.4}><Store /></TaskSlot>
        <TaskSlot $w={62.4}><Infinity8 /></TaskSlot>
        <TaskSlot $w={62.4}><Mail /></TaskSlot>
        <TaskSlot $w={62.4} $mark="short"><ChromeIcon /></TaskSlot>
        <TaskSlot $w={62.4}><Insta /></TaskSlot>
        <TaskSlot $w={62.4} $mark="short"><Palette /></TaskSlot>
        <TaskSlot $w={62.4} $on $mark="full"><ExcelIcon /></TaskSlot>
        <Tray>
          <TraySlot $w={44}><HelpBadge /></TraySlot>
          <TraySlot $w={63}><People /></TraySlot>
          <TraySlot $w={32}>
            <svg width="16" height="9" viewBox="0 0 16 9" fill="none" stroke="#fff"><path d="M1 8l7-7 7 7" /></svg>
          </TraySlot>
          <TraySlot $w={51}><Battery /></TraySlot>
          <TraySlot $w={30}><Wifi /></TraySlot>
          <TraySlot $w={50}><Pen /></TraySlot>
          <TraySlot $w={50}>ESP</TraySlot>
          <TraySlot $w={92}>
            <span>2:40 p. m.</span>
            <span>17/03/2019</span>
          </TraySlot>
          <TraySlot $w={62}><Notification /></TraySlot>
        </Tray>
      </Taskbar>
    </Page>
  );
}
